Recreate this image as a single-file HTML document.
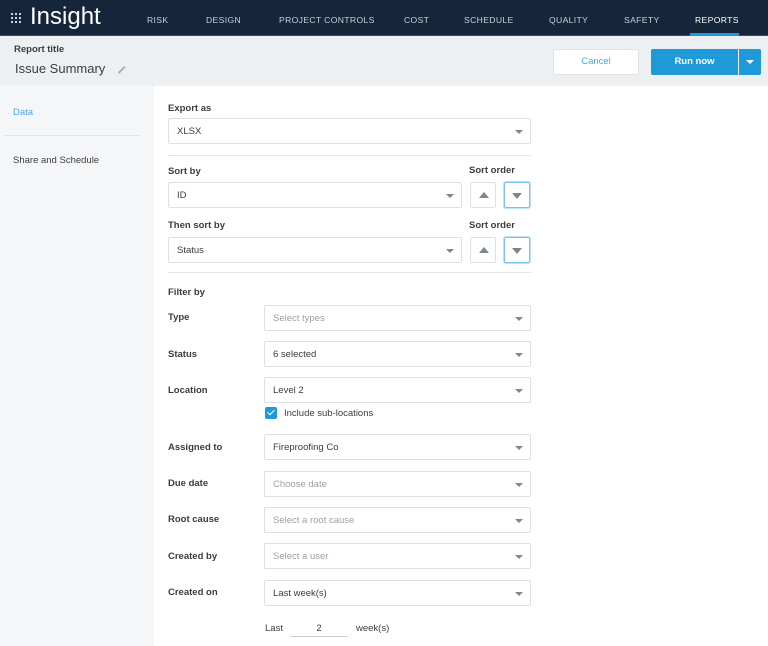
<!DOCTYPE html>
<html><head><meta charset="utf-8"><style>
*{box-sizing:border-box;margin:0;padding:0}
body{width:768px;height:646px;overflow:hidden;font-family:"Liberation Sans",sans-serif;background:#fff;position:relative;color:#3c3c3c}
.a{position:absolute}
.hdr{left:0;top:0;width:768px;height:36px;background:#15263a;border-bottom:1px solid #3a4a5c}
.nav{top:15px;font-size:8.6px;color:#c9d0d8;letter-spacing:.35px}
.sub{left:0;top:36px;width:768px;height:50px;background:#edf0f3}
.side{left:0;top:86px;width:154px;height:560px;background:#f5f6f8}
.lbl{font-size:9.5px;font-weight:bold;color:#3c3c3c}
.inp{height:26px;border:1px solid #dde1e6;border-radius:2px;background:#fff;font-size:9.5px;color:#3c3c3c;padding:1px 8px 0;line-height:24px}
.inp.ph{color:#9aa0a6}
.inp:after{content:"";position:absolute;right:7px;top:11px;border-left:4px solid transparent;border-right:4px solid transparent;border-top:4px solid #7d8790}
.btn{width:26px;height:26px;border:1px solid #dde1e6;border-radius:2px;background:#fff}
.sel{border:1px solid #7cc3ec;box-shadow:0 0 0 1px #bde1f5}
.up:after{content:"";position:absolute;left:8px;top:9px;border-left:5px solid transparent;border-right:5px solid transparent;border-bottom:6px solid #7d8790}
.dn:after{content:"";position:absolute;left:7px;top:10px;border-left:5px solid transparent;border-right:5px solid transparent;border-top:6px solid #7d8790}
.hr{height:1px;background:#e3e6ea}
</style></head><body>
<div class="a hdr"></div>
<div class="a" style="left:10px;top:12px;width:11px;height:11px;background:
radial-gradient(circle,#c9d0d8 1.1px,transparent 1.3px) 0 0/4px 4px"></div>
<div class="a" style="left:30px;top:3px;font-size:24px;color:#fff">Insight</div>
<div class="a nav" style="left:147px">RISK</div>
<div class="a nav" style="left:206px">DESIGN</div>
<div class="a nav" style="left:279px">PROJECT CONTROLS</div>
<div class="a nav" style="left:404px">COST</div>
<div class="a nav" style="left:464px">SCHEDULE</div>
<div class="a nav" style="left:549px">QUALITY</div>
<div class="a nav" style="left:624px">SAFETY</div>
<div class="a nav" style="left:695px;color:#fff">REPORTS</div>
<div class="a" style="left:690px;top:33px;width:49px;height:3px;background:#1f9ad8"></div>
<div class="a sub"></div>
<div class="a lbl" style="left:14px;top:44px">Report title</div>
<div class="a" style="left:15px;top:61px;font-size:13px;color:#3c3c3c">Issue Summary</div>
<div class="a" style="left:117px;top:69px;width:9px;height:1.5px;background:#aab0b6;transform:rotate(-45deg)"></div>
<div class="a" style="left:553px;top:49px;width:86px;height:26px;background:#fff;border:1px solid #e0e3e7;border-radius:2px;font-size:9.5px;color:#4aa8df;text-align:center;line-height:24px">Cancel</div>
<div class="a" style="left:651px;top:49px;width:87px;height:26px;background:#1f9ad8;border-radius:2px 0 0 2px;font-size:9.5px;color:#fff;font-weight:bold;text-align:center;line-height:26px">Run now</div>
<div class="a" style="left:739px;top:49px;width:22px;height:26px;background:#1f9ad8;border-radius:0 2px 2px 0"></div>
<div class="a" style="left:746px;top:60px;border-left:4px solid transparent;border-right:4px solid transparent;border-top:4px solid #fff"></div>
<div class="a side"></div>
<div class="a" style="left:13px;top:107px;font-size:9.5px;color:#4aa8df">Data</div>
<div class="a hr" style="left:3px;top:135px;width:137px"></div>
<div class="a" style="left:13px;top:155px;font-size:9.5px;color:#3c3c3c">Share and Schedule</div>

<div class="a lbl" style="left:168px;top:103px">Export as</div>
<div class="a inp" style="left:168px;top:118px;width:363px">XLSX</div>
<div class="a hr" style="left:168px;top:155px;width:363px"></div>
<div class="a lbl" style="left:168px;top:166px">Sort by</div>
<div class="a lbl" style="left:469px;top:165px">Sort order</div>
<div class="a inp" style="left:168px;top:182px;width:294px">ID</div>
<div class="a btn up" style="left:470px;top:182px"></div>
<div class="a btn dn sel" style="left:504px;top:182px"></div>
<div class="a lbl" style="left:168px;top:220px">Then sort by</div>
<div class="a lbl" style="left:469px;top:220px">Sort order</div>
<div class="a inp" style="left:168px;top:237px;width:294px">Status</div>
<div class="a btn up" style="left:470px;top:237px"></div>
<div class="a btn dn sel" style="left:504px;top:237px"></div>
<div class="a hr" style="left:168px;top:272px;width:363px"></div>
<div class="a lbl" style="left:168px;top:287px">Filter by</div>

<div class="a lbl" style="left:168px;top:312px">Type</div>
<div class="a inp ph" style="left:264px;top:305px;width:267px">Select types</div>
<div class="a lbl" style="left:168px;top:349px">Status</div>
<div class="a inp" style="left:264px;top:341px;width:267px">6 selected</div>
<div class="a lbl" style="left:168px;top:385px">Location</div>
<div class="a inp" style="left:264px;top:377px;width:267px">Level 2</div>
<div class="a" style="left:265px;top:407px;width:12px;height:12px;background:#1f9ad8;border-radius:2px"></div>
<div class="a" style="left:269px;top:408px;width:4px;height:7px;border:solid #fff;border-width:0 1.5px 1.5px 0;transform:rotate(45deg)"></div>
<div class="a" style="left:284px;top:408px;font-size:9.5px">Include sub-locations</div>
<div class="a lbl" style="left:168px;top:442px">Assigned to</div>
<div class="a inp" style="left:264px;top:434px;width:267px">Fireproofing Co</div>
<div class="a lbl" style="left:168px;top:478px">Due date</div>
<div class="a inp ph" style="left:264px;top:471px;width:267px">Choose date</div>
<div class="a lbl" style="left:168px;top:514px">Root cause</div>
<div class="a inp ph" style="left:264px;top:507px;width:267px">Select a root cause</div>
<div class="a lbl" style="left:168px;top:551px">Created by</div>
<div class="a inp ph" style="left:264px;top:543px;width:267px">Select a user</div>
<div class="a lbl" style="left:168px;top:587px">Created on</div>
<div class="a inp" style="left:264px;top:580px;width:267px">Last week(s)</div>
<div class="a" style="left:265px;top:623px;font-size:9.5px">Last</div>
<div class="a" style="left:290px;top:623px;width:58px;font-size:9.5px;text-align:center;border-bottom:1px solid #c8d0d8;padding-bottom:2px">2</div>
<div class="a" style="left:356px;top:623px;font-size:9.5px">week(s)</div>
</body></html>
